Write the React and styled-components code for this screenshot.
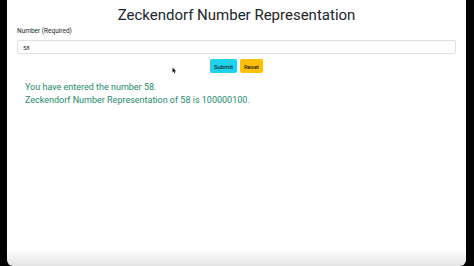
import React from 'react'
import styled, { createGlobalStyle } from 'styled-components'

const Global = createGlobalStyle`
  html, body {
    margin: 0;
    padding: 0;
    background: #000;
  }
  body {
    font-family: Roboto, "Helvetica Neue", Arial, sans-serif;
  }
  * {
    box-sizing: border-box;
  }
`

const Frame = styled.div`
  display: flex;
  height: 266px;
  padding: 0 8px 0 7px;
`

const Page = styled.div`
  flex: 1;
  display: flex;
  flex-direction: column;
  background: linear-gradient(to bottom, #fff 0, #fff 250px, #f1f1f1 258px, #e4e4e4 266px);
  border-radius: 0 0 6px 6px;
  padding: 0 10px;
`

const Title = styled.h1`
  margin: 5px 0 0;
  text-align: center;
  font-weight: 400;
  font-size: 15px;
  line-height: 20px;
  color: #212529;
`

const Label = styled.label`
  margin-top: 2px;
  font-size: 6.5px;
  line-height: 9px;
  color: #212529;
`

const Input = styled.div`
  margin-top: 4px;
  height: 14px;
  border: 1px solid #dee2e6;
  border-radius: 2px;
  display: flex;
  align-items: center;
  padding: 0 5px;
  font-size: 6px;
  color: #212529;
`

const Actions = styled.div`
  position: relative;
  display: flex;
  justify-content: center;
  gap: 3px;
  margin-top: 5px;
`

const Button = styled.button`
  height: 14px;
  padding: 0 4px;
  border: none;
  border-radius: 2px;
  font-family: inherit;
  font-size: 6px;
  color: #000;
  background: ${p => p.$bg};
`

const Pointer = styled.svg`
  position: absolute;
  left: 155px;
  top: 8px;
`

const Result = styled.div`
  margin-top: 8px;
  padding-left: 8px;
  color: #1e8a6c;
  font-size: 9px;
  line-height: 13px;
`

export default function App () {
  return (
    <Frame>
      <Global />
      <Page>
        <Title>Zeckendorf Number Representation</Title>
        <Label>Number (Required)</Label>
        <Input>58</Input>
        <Actions>
          <Pointer width="5" height="7" viewBox="0 0 5 7">
            <path d="M0.5 0.5 L0.5 5.5 L1.7 4.4 L2.6 6.5 L3.3 6.2 L2.5 4.2 L4.2 4.2 Z" fill="#111" />
          </Pointer>
          <Button $bg="#1fd3ec">Submit</Button>
          <Button $bg="#fbc10a">Reset</Button>
        </Actions>
        <Result>
          <div>You have entered the number 58.</div>
          <div>Zeckendorf Number Representation of 58 is 100000100.</div>
        </Result>
      </Page>
    </Frame>
  )
}
